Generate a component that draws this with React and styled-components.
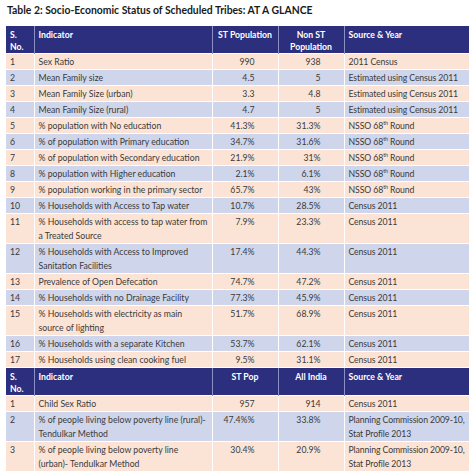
import React from 'react';
import styled, { createGlobalStyle } from 'styled-components';

const GlobalStyle = createGlobalStyle`
  body {
    margin: 0;
    background: #ffffff;
    font-family: Lato, "Open Sans", sans-serif;
  }
`;

const Page = styled.div`
  padding: 4px 5px 0 6px;
  width: 474px;
  box-sizing: border-box;
`;

const Title = styled.h2`
  margin: 0 0 8px 1px;
  font-size: 10.4px;
  line-height: 13px;
  font-weight: 700;
  color: #1a1a1a;
`;

const Table = styled.table`
  width: 463px;
  border-collapse: collapse;
  table-layout: fixed;
  font-size: 8.7px;
  color: #3a3a3a;
`;

const Head = styled.th`
  background: #2c2f7d;
  color: #ffffff;
  font-weight: 700;
  text-align: ${(p) => p.$align || 'left'};
  vertical-align: top;
  padding: 3px 4px 1px 4px;
  line-height: 11.5px;
  height: 22px;
  border-left: 1px solid #8a8fc4;
  border-top: 1px solid #ffffff;
  &:first-child {
    border-left: none;
  }
`;

const Row = styled.tr`
  background: ${(p) => (p.$alt ? '#cfd6ec' : '#fbe4d5')};
`;

const Cell = styled.td`
  text-align: ${(p) => p.$align || 'left'};
  vertical-align: top;
  padding: ${(p) => (p.$align === 'right' ? '1px 23px 0 4px' : '1px 4px 0 4px')};
  line-height: 14px;
  border-left: 1px solid #ffffff;
  border-top: 1px solid #ffffff;
  &:first-child {
    border-left: none;
  }
  &:last-child {
    padding-right: 0;
    letter-spacing: -0.1px;
  }
`;

const Sup = styled.sup`
  font-size: 5.5px;
  line-height: 0;
`;

const nsso = (
  <>
    NSSO 68<Sup>th</Sup> Round
  </>
);

const rows = [
  ['1', 'Sex Ratio', '990', '938', '2011 Census'],
  ['2', 'Mean Family size', '4.5', '5', 'Estimated using Census 2011'],
  ['3', 'Mean Family Size (urban)', '3.3', '4.8', 'Estimated using Census 2011'],
  ['4', 'Mean Family Size (rural)', '4.7', '5', 'Estimated using Census 2011'],
  ['5', '% population with No education', '41.3%', '31.3%', nsso],
  ['6', '% of population with Primary education', '34.7%', '31.6%', nsso],
  ['7', '% of population with Secondary education', '21.9%', '31%', nsso],
  ['8', '% population with Higher education', '2.1%', '6.1%', nsso],
  ['9', '% population working  in the primary sector', '65.7%', '43%', nsso],
  ['10', '% Households with Access to Tap water', '10.7%', '28.5%', 'Census 2011'],
  ['11', '% Households with access to tap water from a Treated Source', '7.9%', '23.3%', 'Census 2011'],
  ['12', '% Households with Access to Improved Sanitation Facilities', '17.4%', '44.3%', 'Census 2011'],
  ['13', 'Prevalence of Open Defecation', '74.7%', '47.2%', 'Census 2011'],
  ['14', '% Households with no Drainage Facility', '77.3%', '45.9%', 'Census 2011'],
  ['15', '% Households with electricity as main source of lighting', '51.7%', '68.9%', 'Census 2011'],
  ['16', '% Households with a separate Kitchen', '53.7%', '62.1%', 'Census 2011'],
  ['17', '% Households using clean cooking fuel', '9.5%', '31.1%', 'Census 2011'],
];

const rows2 = [
  ['1', 'Child Sex Ratio', '957', '914', 'Census 2011'],
  ['2', '% of people living below poverty line (rural)-Tendulkar Method', '47.4%%', '33.8%', 'Planning Commission 2009-10, Stat Profile 2013'],
  ['3', '% of people living below poverty line (urban)- Tendulkar Method', '30.4%', '20.9%', 'Planning Commission 2009-10, Stat Profile 2013'],
];

function HeaderRow({ pop, other }) {
  return (
    <tr>
      <Head>
        S.
        <br />
        No.
      </Head>
      <Head>Indicator</Head>
      <Head $align="center">{pop}</Head>
      <Head $align="center">{other}</Head>
      <Head>Source &amp; Year</Head>
    </tr>
  );
}

function DataRow({ r, alt }) {
  return (
    <Row $alt={alt}>
      <Cell>{r[0]}</Cell>
      <Cell>{r[1]}</Cell>
      <Cell $align="right">{r[2]}</Cell>
      <Cell $align="right">{r[3]}</Cell>
      <Cell>{r[4]}</Cell>
    </Row>
  );
}

export default function App() {
  return (
    <Page>
      <GlobalStyle />
      <Title>Table 2: Socio-Economic Status of Scheduled Tribes: AT A GLANCE</Title>
      <Table>
        <colgroup>
          <col style={{ width: 28 }} />
          <col style={{ width: 178 }} />
          <col style={{ width: 66 }} />
          <col style={{ width: 66 }} />
          <col style={{ width: 125 }} />
        </colgroup>
        <tbody>
          <HeaderRow
            pop="ST Population"
            other={
              <>
                Non ST
                <br />
                Population
              </>
            }
          />
          {rows.map((r, i) => (
            <DataRow key={`a${i}`} r={r} alt={i % 2 === 1} />
          ))}
          <HeaderRow pop="ST Pop" other="All India" />
          {rows2.map((r, i) => (
            <DataRow key={`b${i}`} r={r} alt={i % 2 === 1} />
          ))}
        </tbody>
      </Table>
    </Page>
  );
}
